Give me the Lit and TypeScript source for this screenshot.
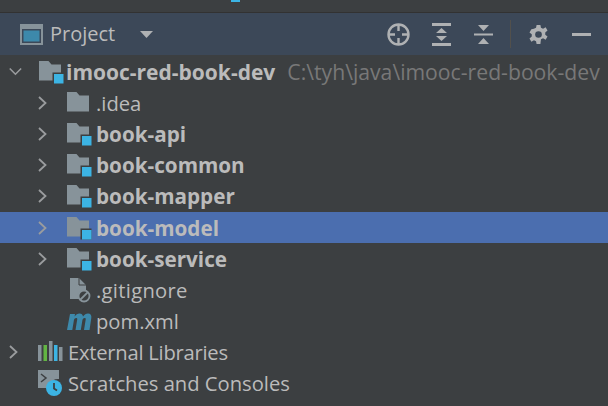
import { LitElement, html, css, svg } from "lit";
import { customElement } from "lit/decorators.js";

const folder = (mod: boolean) => html`<svg class="ficon" width="32" height="28" viewBox="0 0 32 28">
  <path d="M1 3h9.500l3 3.500H23v16H1z" fill="#87939a"/>
  ${mod ? svg`<rect x="14.500" y="14.500" width="11" height="11" fill="#3c3f41"/><rect x="16" y="16" width="9.500" height="9.500" fill="#3cb4e4"/>` : ""}
</svg>`;

const chevronR = html`<svg width="14" height="16" viewBox="0 0 14 16"><path d="M3 2l6.500 6L3 14" fill="none" stroke="#9a9c9e" stroke-width="1.800"/></svg>`;
const chevronD = html`<svg width="16" height="14" viewBox="0 0 16 14"><path d="M2 3l6.500 6.500L15 3" fill="none" stroke="#9a9c9e" stroke-width="1.800"/></svg>`;

const rows = [".idea", "book-api", "book-common", "book-mapper", "book-model", "book-service"];

@customElement("app-root")
export class AppRoot extends LitElement {
  static styles = css`
    :host { display: block; width: 608px; height: 406px; background: #3c3f41; overflow: hidden;
      font-family: "Open Sans", "Noto Sans", sans-serif; color: #bbbbbb; }
    .top { height: 12px; background: #3c3f41; border-bottom: 1px solid #323232; position: relative; }
    .top i { position: absolute; left: 231px; top: 0; width: 9px; height: 2px; background: #3cb4e4; }
    .header { height: 42px; background: #3c4858; display: flex; align-items: center; padding-left: 20px; }
    .title { font-size: 20px; margin-left: 7px; color: #bbbbbb; line-height: 1; }
    .caret { margin-left: 25px; }
    .tools { margin-left: auto; display: flex; align-items: center; margin-right: 17px; }
    .expand { margin-left: 22px; }
    .collapse { margin-left: 23px; }
    .sep { width: 1px; height: 28px; background: #52504c; margin: 0 18px 0 17px; }
    .minus { margin-left: 24px; }
    .tree { padding-top: 1px; }
    .row { height: 31.2px; display: flex; align-items: center; font-size: 20.2px; white-space: nowrap; }
    .row.sel { background: #4b6eaf; }
    .row.bold .name { font-weight: 700; font-size: 20.7px; }
    .cell { width: 14px; display: flex; justify-content: center; flex: none; }
    .l1 .cell { margin-left: 36px; }
    .l0 .cell { margin-left: 7px; }
    .root .cell { margin-left: 8px; }
    .ic { width: 32px; height: 28px; flex: none; display: flex; align-items: center; margin-left: 16px; }
    .file .ic { margin-left: 66px; }
    .name { margin-left: -2px; }
    .l0 .name { margin-left: -1px; }
    .root .name { margin-left: -4px; }
    .row.root .name { font-size: 21px; }
    .ext { letter-spacing: -0.25px; }
    .git { letter-spacing: 0.3px; }
    .path { color: #787878; margin-left: 12px; font-size: 21.2px; }
    svg { display: block; }
  `;
  render() {
    return html`
      <div class="top"><i></i></div>
      <div class="header">
        <svg width="23" height="21" viewBox="0 0 23 21"><rect x="1" y="1" width="21" height="19" fill="none" stroke="#87939a" stroke-width="2"/><rect x="1" y="1" width="21" height="4" fill="#87939a"/><rect x="3.500" y="6.500" width="16" height="11" fill="#3d89ab"/></svg>
        <span class="title">Project</span>
        <svg class="caret" width="13" height="7" viewBox="0 0 13 7"><path d="M0 0h13L6.500 7z" fill="#afb1b3"/></svg>
        <div class="tools">
          <svg width="23" height="23" viewBox="0 0 23 23" fill="none" stroke="#afb1b3" stroke-width="2.400"><circle cx="11.500" cy="11.500" r="10"/><path d="M11.500 1.500v6.500M11.500 15v6.500M1.500 11.500h6.500M15 11.500h6.500"/></svg>
          <svg class="expand" width="19" height="23" viewBox="0 0 19 23" fill="#afb1b3"><rect y="0" width="19" height="3"/><rect y="20" width="19" height="3"/><path d="M9.500 5l5.500 5H4zM9.500 18l5.500-5H4z"/></svg>
          <svg class="collapse" width="19" height="19" viewBox="0 0 19 19" fill="#afb1b3"><rect y="8.500" width="19" height="2"/><path d="M4 0h11L9.500 6zM4 19h11L9.500 13z"/></svg>
          <div class="sep"></div>
          <svg width="19" height="21" viewBox="0 0 20 22"><path d="M8 1h4l.6 3 2.200 1 2.700-1.600 2 3.400-2.400 2v2.400l2.400 2-2 3.400-2.700-1.600-2.200 1L12 21H8l-.6-3-2.200-1-2.700 1.600-2-3.400 2.400-2V10.800l-2.400-2 2-3.400L5.200 5l2.200-1z" fill="#afb1b3"/><circle cx="10" cy="11" r="3.500" fill="#3c4858"/></svg>
          <svg class="minus" width="19" height="3" viewBox="0 0 19 3"><rect width="19" height="3" fill="#afb1b3"/></svg>
        </div>
      </div>
      <div class="tree">
        <div class="row bold root">
          <div class="cell">${chevronD}</div>
          <div class="ic">${folder(true)}</div>
          <span class="name">imooc-red-book-dev</span><span class="path">C:\\tyh\\java\\imooc-red-book-dev</span>
        </div>
        ${rows.map((r, i) => html`<div class="row l1 ${i > 0 ? "bold" : ""} ${r === "book-model" ? "sel" : ""}">
          <div class="cell">${chevronR}</div>
          <div class="ic">${folder(i > 0)}</div>
          <span class="name">${r}</span>
        </div>`)}
        <div class="row file">
          <div class="ic"><svg width="32" height="28" viewBox="0 0 32 28"><path d="M4 2h9l7 7v8h-4v6H4z" fill="#87939a"/><path d="M13 2v7h7" fill="none" stroke="#3c3f41" stroke-width="1"/><circle cx="18" cy="20" r="5.500" fill="#3c3f41" stroke="#87939a" stroke-width="1.800"/><path d="M14 24l8-8" stroke="#87939a" stroke-width="1.800"/></svg></div>
          <span class="name git">.gitignore</span>
        </div>
        <div class="row file">
          <div class="ic"><svg width="32" height="28" viewBox="0 0 32 28"><path d="M1 23L4 7h5l-.4 2.500C10 7.500 11.500 6.500 13.500 6.500c2 0 3.200 1 3.500 3 1.500-2 3-3 5-3 2.500 0 3.800 1.800 3.300 4.500L23.500 23h-5.500l1.700-10.500c.2-1-.2-1.500-1-1.500-1 0-2 .8-2.300 2.300L14.800 23H9.500l1.700-10.500c.2-1-.2-1.500-1-1.500-1 0-2 .8-2.300 2.300L6.300 23z" fill="#3d89ab"/></svg></div>
          <span class="name">pom.xml</span>
        </div>
        <div class="row l0">
          <div class="cell">${chevronR}</div>
          <div class="ic"><svg width="32" height="28" viewBox="0 0 32 28"><rect x="1" y="7" width="3.500" height="16" fill="#87939a"/><rect x="6.500" y="7" width="3.500" height="16" fill="#62b543"/><rect x="12" y="3" width="3.500" height="20" fill="#87939a"/><rect x="17" y="7" width="3.500" height="16" fill="#3cb4e4"/><rect x="22" y="9" width="3.500" height="14" fill="#87939a"/></svg></div>
          <span class="name ext">External Libraries</span>
        </div>
        <div class="row l0">
          <div class="cell"></div>
          <div class="ic"><svg width="32" height="28" viewBox="0 0 32 28"><path d="M1 1h21v9a8 8 0 0 0-9 9H1z" fill="#87939a"/><path d="M4 5l5 4-5 4" fill="none" stroke="#3c3f41" stroke-width="1.500"/><circle cx="17" cy="19" r="8" fill="#3cb4e4"/><path d="M17 14v5.500l3 2" fill="none" stroke="#3c3f41" stroke-width="1.800"/></svg></div>
          <span class="name">Scratches and Consoles</span>
        </div>
      </div>
    `;
  }
}
